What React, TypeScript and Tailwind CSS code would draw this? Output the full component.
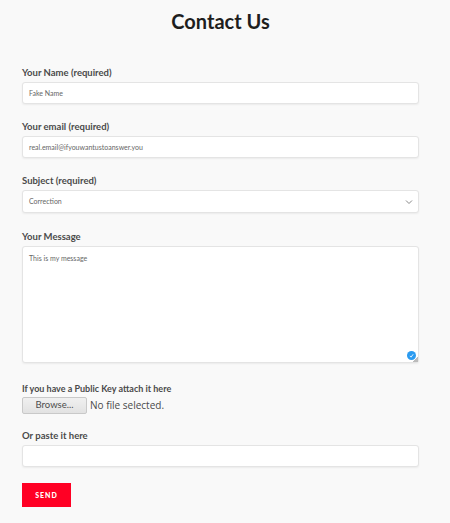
const label = "block text-[9.5px] font-bold leading-[10px] text-[#4a4a4a]";
const field =
  "h-[22px] w-full rounded-[3px] border border-[#e4e4e4] bg-white px-[6px] text-[7px] text-[#666] shadow-[0_1px_2px_rgba(0,0,0,0.06)]";

function Field({ title, value }: { title: string; value: string }) {
  return (
    <div className="flex flex-col gap-[4px]">
      <span className={label}>{title}</span>
      <div className={`${field} flex items-center`}>{value}</div>
    </div>
  );
}

export default function App() {
  return (
    <div
      className="h-[523px] w-[450px] bg-[#f9f9f9] px-[22px] pt-[9px]"
      style={{ fontFamily: "Lato, 'Open Sans', sans-serif" }}
    >
      <h1 className="pr-[9px] text-center text-[20px] font-bold leading-[24px] text-[#1e1e1e]">
        Contact Us
      </h1>

      <form className="mt-[35px] w-[397px]">
        <Field title="Your Name (required)" value="Fake Name" />

        <div className="mt-[18px]">
          <Field title="Your email (required)" value="real.email@ifyouwantustoanswer.you" />
        </div>

        <div className="mt-[18px] flex flex-col gap-[4px]">
          <span className={label}>Subject (required)</span>
          <div className={`${field} flex h-[23px] items-center justify-between pr-[5px]`}>
            <span>Correction</span>
            <svg width="8" height="6" viewBox="0 0 8 6">
              <path d="M1 1.5 L4 4.5 L7 1.5" fill="none" stroke="#888" strokeWidth="1" />
            </svg>
          </div>
        </div>

        <div className="mt-[19px] flex flex-col gap-[4px]">
          <span className={label}>Your Message</span>
          <div className={`${field} relative h-[117px] py-[6px]`}>
            <span>This is my message</span>
            <span className="absolute bottom-0 right-0 h-[6px] w-[6px] bg-[linear-gradient(135deg,transparent_50%,#bbb_50%)]" />
            <span className="absolute bottom-[2px] right-[2px] flex h-[9px] w-[9px] items-center justify-center rounded-full bg-[#2b9bf0]">
              <svg width="5" height="5" viewBox="0 0 6 6">
                <path d="M1 3.5 L2.5 5 L5 1.5" fill="none" stroke="#fff" strokeWidth="1" />
              </svg>
            </span>
          </div>
        </div>

        <div className="mt-[21px] flex flex-col gap-[3px]">
          <span className="block text-[9px] font-bold leading-[10px] text-[#4a4a4a]">
            If you have a Public Key attach it here
          </span>
          <div className="flex items-center gap-[3px]">
            <div className="flex h-[17px] w-[65px] items-center justify-center rounded-[2px] border border-[#c9c9c9] bg-[linear-gradient(#f0f0f0,#e2e2e2)] text-[9.5px] text-[#4d4d4d]">
              Browse...
            </div>
            <span className="text-[10px] text-[#4a4a4a]" style={{ fontFamily: "'Open Sans', sans-serif" }}>
              No file selected.
            </span>
          </div>
        </div>

        <div className="mt-[17px] flex flex-col gap-[4px]">
          <span className={label}>Or paste it here</span>
          <div className={field} />
        </div>

        <button
          type="button"
          className="mt-[16px] flex h-[24px] w-[49px] items-center justify-center bg-[#ff0024] text-[7px] font-black tracking-[1px] text-white"
        >
          SEND
        </button>
      </form>
    </div>
  );
}
